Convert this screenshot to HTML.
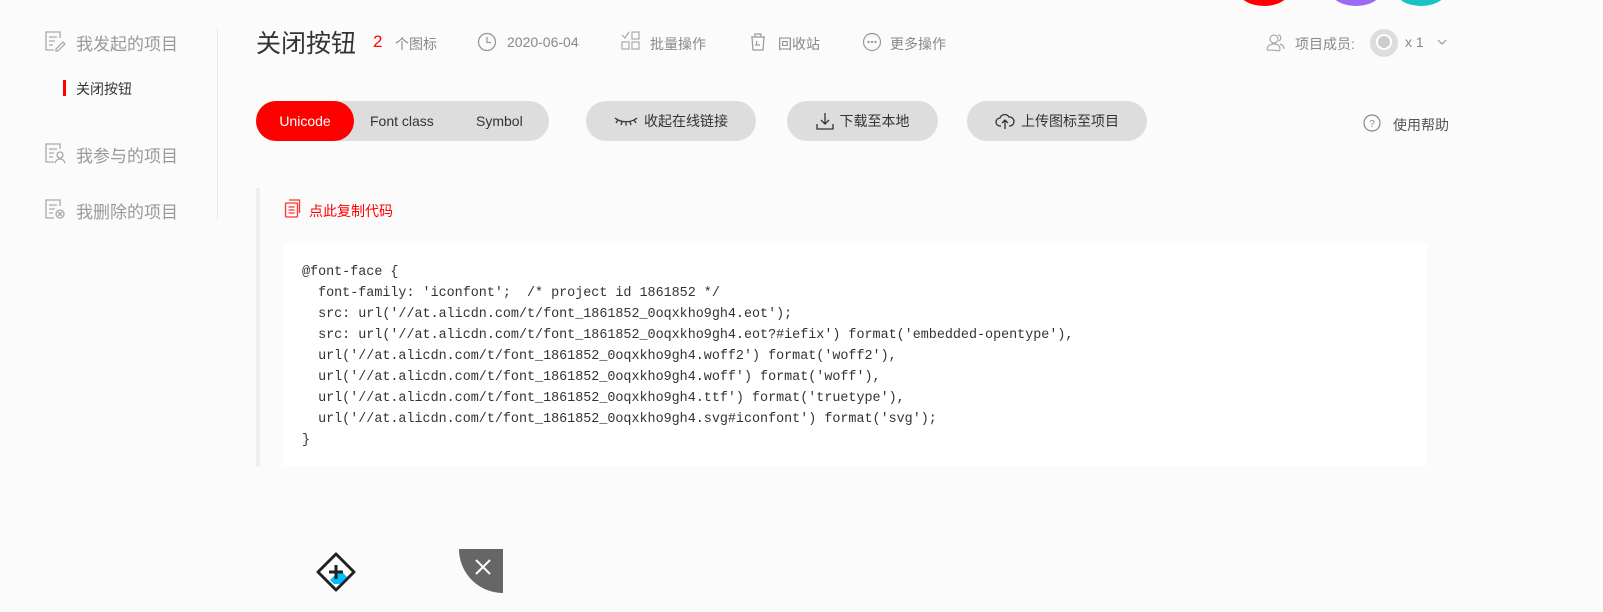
<!DOCTYPE html>
<html><head><meta charset="utf-8"><style>
*{margin:0;padding:0;box-sizing:border-box}
body{width:1603px;height:612px;background:#fbfbfb;font-family:"Liberation Sans","Noto Sans CJK SC",sans-serif;position:relative;overflow:hidden;color:#666}
.a{position:absolute;white-space:nowrap}
.side{font-size:17px;color:#999}
.ico{position:absolute}
.pill{position:absolute;height:40px;border-radius:20px;background:#ddd;font-size:14px;color:#333;display:flex;align-items:center;justify-content:center}
pre.a{font-family:"Liberation Mono",monospace;font-size:13.4px;line-height:21px;color:#333;white-space:pre}
.m{font-size:14px;color:#888}
</style></head><body>
<div class="a" style="left:1238px;top:-26px;width:52px;height:32px;border-radius:50%;background:#f00"></div>
<div class="a" style="left:1330px;top:-26px;width:52px;height:32px;border-radius:50%;background:#9b6bf5"></div>
<div class="a" style="left:1395px;top:-26px;width:52px;height:32px;border-radius:50%;background:#1ac3c3"></div>

<svg class="ico" style="left:44px;top:30px" width="22" height="22" viewBox="0 0 22 22" fill="none" stroke="#aaa" stroke-width="1.3"><path d="M16 8V2H2v18h8M5 7h8M5 11h6M5 15h4"/><path d="M12 19l7-7 2 2-7 7h-2z"/></svg>
<div class="a side" style="left:76px;top:30px">我发起的项目</div>
<div class="a" style="left:63px;top:80px;width:3px;height:16px;background:#f00"></div>
<div class="a" style="left:76px;top:79px;font-size:14px;color:#333">关闭按钮</div>
<svg class="ico" style="left:44px;top:142px" width="22" height="22" viewBox="0 0 22 22" fill="none" stroke="#aaa" stroke-width="1.3"><path d="M16 7V2H2v18h8M5 7h8M5 11h5M5 15h4"/><circle cx="16" cy="13" r="3"/><path d="M11 21c1-3 3-4 5-4s4 1 5 4"/></svg>
<div class="a side" style="left:76px;top:142px">我参与的项目</div>
<svg class="ico" style="left:44px;top:198px" width="22" height="22" viewBox="0 0 22 22" fill="none" stroke="#aaa" stroke-width="1.3"><path d="M16 8V2H2v18h8M5 7h8M5 11h6M5 15h4"/><circle cx="16" cy="16" r="4"/><path d="M14 14l4 4M18 14l-4 4"/></svg>
<div class="a side" style="left:76px;top:198px">我删除的项目</div>
<div class="a" style="left:217px;top:28px;width:1px;height:192px;background:#e8e8e8"></div>

<div class="a" style="left:256px;top:24px;font-size:25px;color:#333">关闭按钮</div>
<div class="a" style="left:373px;top:32px;font-size:17px;color:#f00">2</div>
<div class="a m" style="left:395px;top:34px">个图标</div>
<svg class="ico" style="left:477px;top:32px" width="20" height="20" viewBox="0 0 20 20" fill="none" stroke="#999" stroke-width="1.3"><circle cx="10" cy="10" r="8.5"/><path d="M10 5v5.5h4"/></svg>
<div class="a m" style="left:507px;top:34px">2020-06-04</div>
<svg class="ico" style="left:621px;top:31px" width="20" height="20" viewBox="0 0 20 20" fill="none" stroke="#aaa" stroke-width="1.2"><rect x="1" y="11" width="7" height="7"/><rect x="11" y="11" width="7" height="7"/><rect x="11" y="1" width="7" height="7"/><path d="M1 4l3 3 4-6"/></svg>
<div class="a m" style="left:650px;top:34px">批量操作</div>
<svg class="ico" style="left:749px;top:32px" width="18" height="19" viewBox="0 0 18 19" fill="none" stroke="#999" stroke-width="1.2"><path d="M2 5h14M6 5V2h6v3M3 5l1 13h10l1-13M8 9l-1 4h4"/></svg>
<div class="a m" style="left:778px;top:34px">回收站</div>
<svg class="ico" style="left:862px;top:32px" width="20" height="20" viewBox="0 0 20 20" fill="none" stroke="#999" stroke-width="1.2"><circle cx="10" cy="10" r="8.5"/><circle cx="6.5" cy="10" r=".6" fill="#999"/><circle cx="10" cy="10" r=".6" fill="#999"/><circle cx="13.5" cy="10" r=".6" fill="#999"/></svg>
<div class="a m" style="left:890px;top:34px">更多操作</div>

<svg class="ico" style="left:1266px;top:33px" width="19" height="19" viewBox="0 0 19 19" fill="none" stroke="#aaa" stroke-width="1.2"><circle cx="8" cy="6" r="4"/><path d="M1 17c0-4 3-6 7-6s6 2 6 5-1 1-13 1M12 2c3 0 4 4 1 6M14 11c3 1 4 3 4 5"/></svg>
<div class="a m" style="left:1295px;top:34px">项目成员:</div>
<div class="a" style="left:1370px;top:29px;width:28px;height:28px;border-radius:50%;background:#ddd"><div style="position:absolute;left:6px;top:5px;width:16px;height:16px;border-radius:50%;border:2px solid #fff;background:#ccc"></div></div>
<div class="a m" style="left:1405px;top:34px">x 1</div>
<svg class="ico" style="left:1436px;top:38px" width="12" height="8" viewBox="0 0 12 8" fill="none" stroke="#999" stroke-width="1.2"><path d="M2 2l4 4 4-4"/></svg>

<div class="pill" style="left:256px;top:101px;width:293px"></div>
<div class="pill" style="left:256px;top:101px;width:98px;background:#f00;color:#fff">Unicode</div>
<div class="a" style="left:370px;top:113px;font-size:14px;color:#333">Font class</div>
<div class="a" style="left:476px;top:113px;font-size:14px;color:#333">Symbol</div>

<div class="pill" style="left:586px;top:101px;width:170px"><svg width="24" height="10" viewBox="0 0 24 10" fill="none" stroke="#333" stroke-width="1.3" style="margin-right:6px"><path d="M1 2c6 5 16 5 22 0M4 4l-2 3M8 6l-1 3M12 6.5v3M16 6l1 3M20 4l2 3"/></svg>收起在线链接</div>
<div class="pill" style="left:787px;top:101px;width:151px"><svg width="18" height="18" viewBox="0 0 18 18" fill="none" stroke="#333" stroke-width="1.3" style="margin-right:6px"><path d="M9 1v11M5 8l4 4 4-4M1 12v5h16v-5"/></svg>下载至本地</div>
<div class="pill" style="left:967px;top:101px;width:180px"><svg width="20" height="18" viewBox="0 0 20 18" fill="none" stroke="#333" stroke-width="1.3" style="margin-right:6px"><path d="M6 14H5a4 4 0 010-8 5 5 0 019-1 4 4 0 011 9h-1M10 8v9M7 11l3-3 3 3"/></svg>上传图标至项目</div>

<svg class="ico" style="left:1363px;top:114px" width="18" height="18" viewBox="0 0 18 18" fill="none" stroke="#888" stroke-width="1.2"><circle cx="9" cy="9" r="8"/><text x="9" y="13" font-size="10" text-anchor="middle" fill="#888" stroke="none" font-family="Liberation Sans">?</text></svg>
<div class="a" style="left:1393px;top:115px;font-size:14px;color:#555">使用帮助</div>

<div class="a" style="left:256px;top:188px;width:4px;height:278px;background:#eee"></div>
<svg class="ico" style="left:284px;top:199px" width="18" height="19" viewBox="0 0 18 19" fill="none" stroke="#f33" stroke-width="1.3"><rect x="1.5" y="4" width="12" height="14" rx="1"/><path d="M5 1h10.5v13M4.5 8h6M4.5 11h6M4.5 14h6"/></svg>
<div class="a" style="left:309px;top:201px;font-size:14px;color:#f00">点此复制代码</div>
<div class="a" style="left:284px;top:244px;width:1143px;height:222px;background:#fff"></div>
<pre class="a" style="left:302px;top:262px">@font-face {
  font-family: 'iconfont';  /* project id 1861852 */
  src: url('//at.alicdn.com/t/font_1861852_0oqxkho9gh4.eot');
  src: url('//at.alicdn.com/t/font_1861852_0oqxkho9gh4.eot?#iefix') format('embedded-opentype'),
  url('//at.alicdn.com/t/font_1861852_0oqxkho9gh4.woff2') format('woff2'),
  url('//at.alicdn.com/t/font_1861852_0oqxkho9gh4.woff') format('woff'),
  url('//at.alicdn.com/t/font_1861852_0oqxkho9gh4.ttf') format('truetype'),
  url('//at.alicdn.com/t/font_1861852_0oqxkho9gh4.svg#iconfont') format('svg');
}</pre>

<svg class="ico" style="left:312px;top:548px" width="48" height="48" viewBox="0 0 48 48"><path d="M24 6L42 24 24 42 6 24z" fill="#fff" stroke="#222" stroke-width="3" stroke-linejoin="round"/><path d="M18 32l10-10 7 7-7 7h-6z" fill="#00bfff"/><path d="M24 17v14M17 24h14" stroke="#222" stroke-width="3"/></svg>
<div class="a" style="left:459px;top:549px;width:44px;height:44px;background:#666;border-bottom-left-radius:44px"></div>
<svg class="ico" style="left:474px;top:558px" width="18" height="18" viewBox="0 0 18 18" stroke="#fff" stroke-width="2"><path d="M2 2l14 14M16 2L2 16"/></svg>
</body></html>
